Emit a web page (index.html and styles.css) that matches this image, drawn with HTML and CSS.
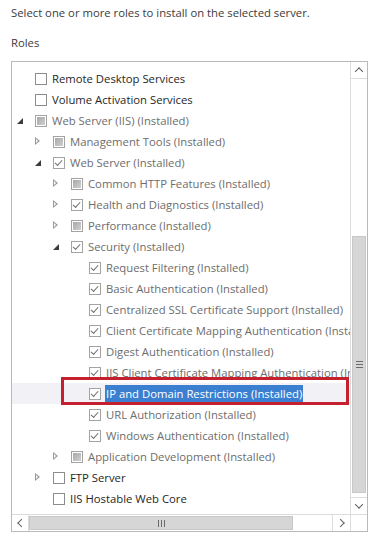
FILE: index.html
```html
<!DOCTYPE html>
<html lang="en">
<head>
  <meta charset="UTF-8" />
  <meta name="viewport" content="width=device-width, initial-scale=1.0"/>
  <title>Select server roles</title>
  <link rel="stylesheet" href="styles.css">
</head>
<body>

<!-- ROLES PAGE -->
<div class="page">
  <p class="intro">Select one or more roles to install on the selected server.</p>
  <h2 class="label">Roles</h2>

  <div class="listbox">
    <div class="viewport">
      <div class="row lv0"><span class="exp"></span><span class="cb"></span><span class="txt normal">Remote Desktop Services</span></div>
      <div class="row lv0"><span class="exp"></span><span class="cb"></span><span class="txt normal">Volume Activation Services</span></div>
      <div class="row lv0"><span class="exp open"></span><span class="cb part"></span><span class="txt">Web Server (IIS) (Installed)</span></div>
      <div class="row lv1"><span class="exp shut"></span><span class="cb part"></span><span class="txt">Management Tools (Installed)</span></div>
      <div class="row lv1"><span class="exp open"></span><span class="cb on"></span><span class="txt">Web Server (Installed)</span></div>
      <div class="row lv2"><span class="exp shut"></span><span class="cb part"></span><span class="txt">Common HTTP Features (Installed)</span></div>
      <div class="row lv2"><span class="exp shut"></span><span class="cb on"></span><span class="txt">Health and Diagnostics (Installed)</span></div>
      <div class="row lv2"><span class="exp shut"></span><span class="cb part"></span><span class="txt">Performance (Installed)</span></div>
      <div class="row lv2"><span class="exp open"></span><span class="cb on"></span><span class="txt">Security (Installed)</span></div>
      <div class="row lv3"><span class="exp"></span><span class="cb on"></span><span class="txt">Request Filtering (Installed)</span></div>
      <div class="row lv3"><span class="exp"></span><span class="cb on"></span><span class="txt">Basic Authentication (Installed)</span></div>
      <div class="row lv3"><span class="exp"></span><span class="cb on"></span><span class="txt">Centralized SSL Certificate Support (Installed)</span></div>
      <div class="row lv3"><span class="exp"></span><span class="cb on"></span><span class="txt">Client Certificate Mapping Authentication (Installed)</span></div>
      <div class="row lv3"><span class="exp"></span><span class="cb on"></span><span class="txt">Digest Authentication (Installed)</span></div>
      <div class="row lv3"><span class="exp"></span><span class="cb on"></span><span class="txt">IIS Client Certificate Mapping Authentication (Installed)</span></div>
      <div class="row lv3 focus"><span class="exp"></span><span class="cb on"></span><span class="txt picked">IP and Domain Restrictions (Installed)</span></div>
      <div class="row lv3"><span class="exp"></span><span class="cb on"></span><span class="txt">URL Authorization (Installed)</span></div>
      <div class="row lv3"><span class="exp"></span><span class="cb on"></span><span class="txt">Windows Authentication (Installed)</span></div>
      <div class="row lv2"><span class="exp shut"></span><span class="cb part"></span><span class="txt">Application Development (Installed)</span></div>
      <div class="row lv1"><span class="exp shut"></span><span class="cb"></span><span class="txt normal">FTP Server</span></div>
      <div class="row lv1"><span class="exp"></span><span class="cb"></span><span class="txt normal">IIS Hostable Web Core</span></div>
      <div class="marker"></div>
    </div>

    <div class="vscroll">
      <span class="arrow up"></span>
      <span class="track top"></span>
      <span class="thumb v"><span class="grip"></span></span>
      <span class="track"></span>
      <span class="arrow down"></span>
    </div>

    <div class="hscroll">
      <span class="arrow left"></span>
      <span class="thumb h"><span class="grip"></span></span>
      <span class="track"></span>
      <span class="arrow right"></span>
    </div>

    <div class="corner"></div>
  </div>
</div>

</body>
</html>
```

FILE: styles.css
```css
:root {
  --text: #262626;
  --muted: #6d6d6d;
  --line: #b9b9b9;
  --thumb: #d6d6d6;
  --pick: #3a7fd0;
  --mark: #c4202e;
}

* {
  box-sizing: border-box;
  margin: 0;
  padding: 0;
}

body {
  font-family: 'Open Sans', 'Noto Sans', sans-serif;
  font-size: 11.3px;
  color: var(--text);
  background: #fff;
}

.page {
  padding: 5px 11px 0;
}

.intro {
  line-height: 16px;
  color: #3b3b3b;
}

.label {
  font-size: 11.3px;
  font-weight: 400;
  line-height: 16px;
  margin-top: 14px;
  color: #3b3b3b;
}

.listbox {
  margin-top: 10px;
  width: 357px;
  height: 471px;
  border: 1px solid var(--line);
  display: grid;
  grid-template-columns: 1fr 17px;
  grid-template-rows: 1fr 17px;
}

.viewport {
  position: relative;
  overflow: hidden;
  padding-top: 6px;
}

.row {
  height: 21px;
  display: flex;
  align-items: center;
  white-space: nowrap;
  position: relative;
  z-index: 1;
}

.lv0 { padding-left: 2px; }
.lv1 { padding-left: 20px; }
.lv2 { padding-left: 38px; }
.lv3 { padding-left: 56px; }

.exp {
  width: 21px;
  height: 21px;
  flex: none;
  position: relative;
}

/* expanded: small filled corner triangle */
.exp.open::before {
  content: "";
  position: absolute;
  left: 3px;
  top: 8px;
  width: 0;
  height: 0;
  border-left: 6px solid transparent;
  border-bottom: 6px solid #3c3c3c;
}

/* collapsed: hollow right-pointing triangle */
.exp.shut::before {
  content: "";
  position: absolute;
  left: 3px;
  top: 6px;
  border-top: 4.5px solid transparent;
  border-bottom: 4.5px solid transparent;
  border-left: 5px solid #9a9a9a;
}

.exp.shut::after {
  content: "";
  position: absolute;
  left: 4px;
  top: 8px;
  border-top: 2.5px solid transparent;
  border-bottom: 2.5px solid transparent;
  border-left: 2.8px solid #fff;
}

.cb {
  width: 12px;
  height: 12px;
  flex: none;
  border: 1px solid #8c8c8c;
  background: #fff;
  position: relative;
  margin-right: 4px;
}

.cb.on,
.cb.part {
  border-color: #a3a3a3;
}

.cb.on::after {
  content: "";
  position: absolute;
  left: 2px;
  top: 1px;
  width: 6px;
  height: 3px;
  border-left: 1.5px solid #707070;
  border-bottom: 1.5px solid #707070;
  transform: translate(0, 1px) rotate(-48deg) scale(1.05);
  transform-origin: 3px 3px;
}

.cb.part::after {
  content: "";
  position: absolute;
  left: 1px;
  top: 1px;
  width: 8px;
  height: 8px;
  background: linear-gradient(135deg, #a8a8a8, #d0d0d0);
}

.txt {
  color: var(--muted);
  line-height: 18px;
  padding: 0 1px;
}

.txt.normal {
  color: var(--text);
}

.txt.picked {
  background: var(--pick);
  color: #fff;
}

.focus {
  background: #f2f2f6;
}

/* red call-out round the selected row */
.marker {
  position: absolute;
  left: 49px;
  top: 315px;
  width: 288px;
  height: 28px;
  border: 3px solid var(--mark);
  z-index: 2;
}

.vscroll {
  border-left: 1px solid #dcdcdc;
  display: flex;
  flex-direction: column;
}

.hscroll {
  border-top: 1px solid #dcdcdc;
  display: flex;
}

.corner {
  border-left: 1px solid #dcdcdc;
  border-top: 1px solid #dcdcdc;
}

.arrow {
  flex: none;
  width: 16px;
  height: 16px;
  position: relative;
}

.vscroll .arrow { width: 100%; }
.vscroll .arrow.up { border-bottom: 1px solid #dcdcdc; height: 17px; }
.vscroll .arrow.down { border-top: 1px solid #dcdcdc; height: 17px; }
.hscroll .arrow { height: 100%; }
.hscroll .arrow.left { border-right: 1px solid #dcdcdc; width: 17px; }
.hscroll .arrow.right { border-left: 1px solid #dcdcdc; width: 18px; }

.arrow::after {
  content: "";
  position: absolute;
  left: 50%;
  top: 50%;
  width: 5px;
  height: 5px;
  border-left: 1px solid #606060;
  border-top: 1px solid #606060;
}

.arrow.up::after { transform: translate(-50%, -25%) rotate(45deg); }
.arrow.down::after { transform: translate(-50%, -75%) rotate(225deg); }
.arrow.left::after { transform: translate(-25%, -50%) rotate(-45deg); }
.arrow.right::after { transform: translate(-75%, -50%) rotate(135deg); }

.track {
  flex: 1;
}

.track.top {
  flex: none;
  height: 157px;
}

.thumb {
  background: var(--thumb);
  border: 1px solid #c8c8c8;
  display: flex;
  align-items: center;
  justify-content: center;
}

.thumb.v {
  height: 257px;
  margin: 0 1px;
}

.thumb.h {
  width: 264px;
  margin: 1px 0;
}

.thumb.v .grip {
  width: 7px;
  height: 7px;
  border-top: 1px solid #6a6a6a;
  border-bottom: 1px solid #6a6a6a;
  background: linear-gradient(#6a6a6a, #6a6a6a) center / 100% 1px no-repeat;
}

.thumb.h .grip {
  width: 7px;
  height: 7px;
  border-left: 1px solid #6a6a6a;
  border-right: 1px solid #6a6a6a;
  background: linear-gradient(#6a6a6a, #6a6a6a) center / 1px 100% no-repeat;
}
```
